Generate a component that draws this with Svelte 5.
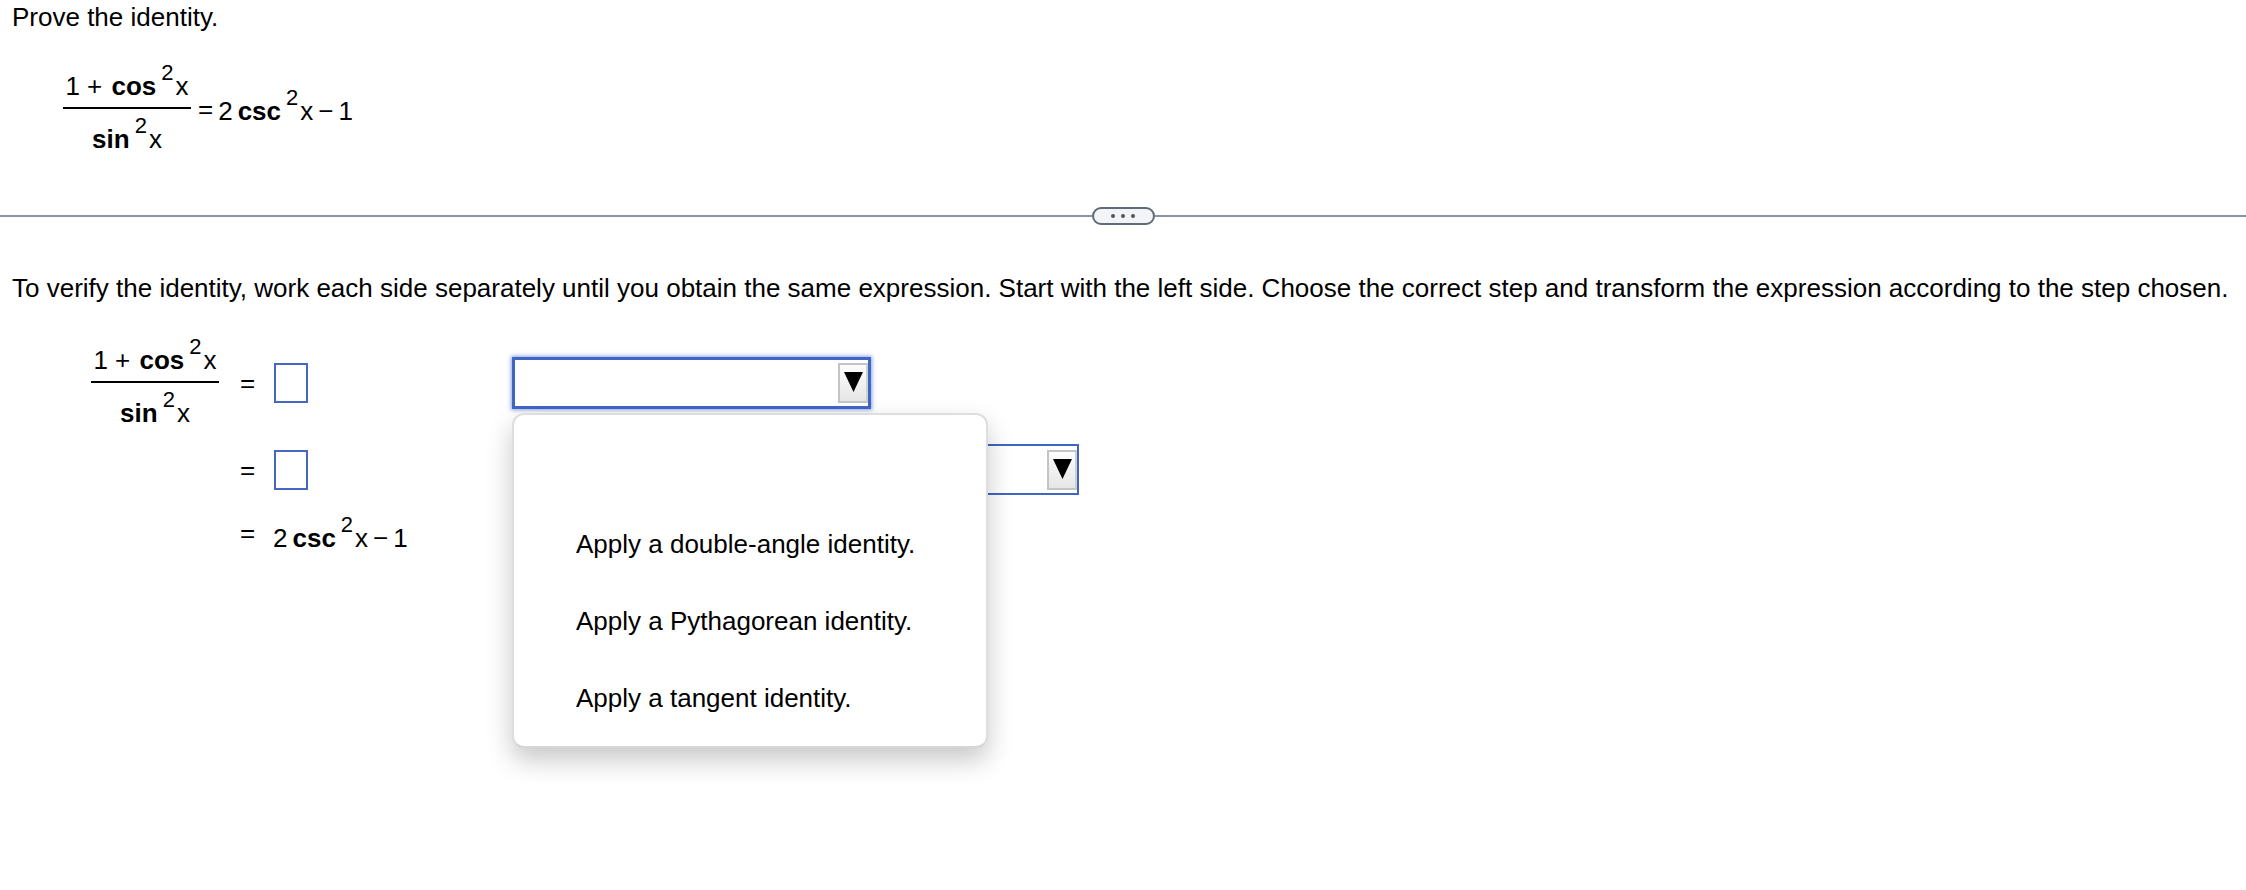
<script lang="ts">
  const options = ['Apply a double-angle identity.', 'Apply a Pythagorean identity.', 'Apply a tangent identity.']
</script>

{#snippet squared(fn: string)}
  <b>{fn}</b><sup>2</sup><span class="var">x</span>
{/snippet}

{#snippet fraction()}
  <span class="frac">
    <span class="num">1 + <span class="gap"></span>{@render squared('cos')}</span>
    <span class="den">{@render squared('sin')}</span>
  </span>
{/snippet}

{#snippet rhs()}
  <span class="expr"><span class="two">2</span>{@render squared('csc')}<span class="minus">−</span>1</span>
{/snippet}

{#snippet arrow()}
  <span class="arrow-btn">
    <svg width="19" height="20" viewBox="0 0 19 20"><path d="M0 0H19L9.5 20Z" fill="#000" /></svg>
  </span>
{/snippet}

<main>
  <p class="prompt">Prove the identity.</p>

  <div class="identity">
    {@render fraction()}
    <span class="eq">=</span>
    {@render rhs()}
  </div>

  <div class="divider">
    <span class="rule"></span>
    <span class="handle"><i></i><i></i><i></i></span>
    <span class="rule"></span>
  </div>

  <p class="instructions">To verify the identity, work each side separately until you obtain the same expression. Start with the left side. Choose the correct step and transform the expression according to the step chosen.</p>

  <div class="steps">
    <div class="row first">
      <div class="left">{@render fraction()}</div>
      <span class="eq">=</span>
      <span class="box"></span>
      <div class="select focused">{@render arrow()}</div>
    </div>
    <div class="row second">
      <div class="left"></div>
      <span class="eq">=</span>
      <span class="box"></span>
      <div class="select wide">{@render arrow()}</div>
    </div>
    <div class="row third">
      <div class="left"></div>
      <span class="eq">=</span>
      {@render rhs()}
    </div>

    <ul class="menu">
      {#each options as option}
        <li>{option}</li>
      {/each}
    </ul>
  </div>
</main>

<style>
  :global(body) {
    margin: 0;
    background: #fff;
  }

  main {
    width: 2246px;
    height: 890px;
    overflow: hidden;
    font-family: "Liberation Sans", Arial, sans-serif;
    font-size: 26px;
    color: #000;
  }

  p { margin: 0; }

  .prompt {
    padding: 2px 0 0 12px;
    line-height: 30px;
    height: 30px;
  }

  b { font-weight: 700; }

  sup {
    font-size: 22px;
    line-height: 0;
    position: relative;
    top: -15px;
    vertical-align: baseline;
    margin-left: 5px;
  }

  .var { margin-left: 2px; }
  .gap { display: inline-block; width: 2px; }
  .two { margin-right: 5px; }
  .minus { margin: 0 5px 0 5px; }

  .frac {
    display: inline-flex;
    flex-direction: column;
    align-items: center;
    width: 128px;
    white-space: nowrap;
  }

  .num, .den {
    line-height: 30px;
    display: block;
  }
  .num {
    border-bottom: 2px solid #000;
    width: 100%;
    text-align: center;
    height: 36px;
    padding-top: 7px;
  }
  .den { padding-top: 15px; }

  .eq { line-height: 30px; }

  .expr {
    white-space: nowrap;
    margin-top: 4px;
  }

  .identity {
    display: flex;
    align-items: center;
    margin: 32px 0 0 63px;
    height: 90px;
  }
  .identity .eq { margin: 0 5px 0 7px; }

  .divider {
    display: flex;
    align-items: center;
    margin-top: 53px;
    height: 18px;
  }
  .rule {
    flex: 1;
    height: 2px;
    background: #8a92a8;
  }
  .handle {
    width: 63px;
    height: 18px;
    box-sizing: border-box;
    border: 2px solid #5d6b7a;
    border-radius: 9px;
    background: #f2f4f7;
    display: flex;
    align-items: center;
    justify-content: center;
    gap: 6px;
  }
  .handle i {
    width: 4px;
    height: 4px;
    border-radius: 50%;
    background: #4d5560;
  }

  .instructions {
    margin: 48px 0 0 12px;
    line-height: 30px;
    white-space: nowrap;
  }

  .steps {
    position: relative;
    margin-top: 35px;
  }

  .row {
    display: flex;
    align-items: center;
  }
  .row.first { height: 90px; }
  .row.second { height: 51px; margin-top: 16px; }
  .row.third { height: 40px; margin-top: 18px; }
  .row.third .expr { margin: 10px 0 0 -1px; }

  .left {
    width: 240px;
    padding-left: 91px;
    box-sizing: border-box;
  }
  .row .eq { width: 34px; }

  .box {
    width: 34px;
    height: 40px;
    box-sizing: border-box;
    border: 2px solid #4468c4;
  }

  .select {
    position: relative;
    margin-left: 204px;
    box-sizing: border-box;
    width: 359px;
    height: 52px;
    border: 2px solid #3f65c6;
    background: #fff;
  }
  .select.focused {
    border-width: 3px;
    box-shadow: 0 0 4px 1px rgba(63, 101, 198, .6);
  }
  .select.wide {
    margin-left: 208px;
    width: 563px;
    height: 51px;
  }

  .arrow-btn {
    position: absolute;
    right: 0;
    top: 50%;
    transform: translateY(-50%);
    width: 30px;
    height: 40px;
    box-sizing: border-box;
    border: 2px solid #c4c4c4;
    border-right-color: #d0d0d0;
    background: linear-gradient(#fdfdfd, #e6e6e6);
    display: flex;
    justify-content: center;
    padding-top: 7px;
  }

  .menu {
    position: absolute;
    left: 512px;
    top: 75px;
    width: 476px;
    height: 335px;
    box-sizing: border-box;
    margin: 0;
    padding: 114px 0 0 62px;
    list-style: none;
    background: #fff;
    border: 2px solid #dedede;
    border-bottom-color: #d6d6d6;
    border-radius: 12px;
    box-shadow: 0 12px 26px rgba(0, 0, 0, .22);
  }
  .menu li {
    height: 77px;
    line-height: 30px;
    white-space: nowrap;
  }
</style>
